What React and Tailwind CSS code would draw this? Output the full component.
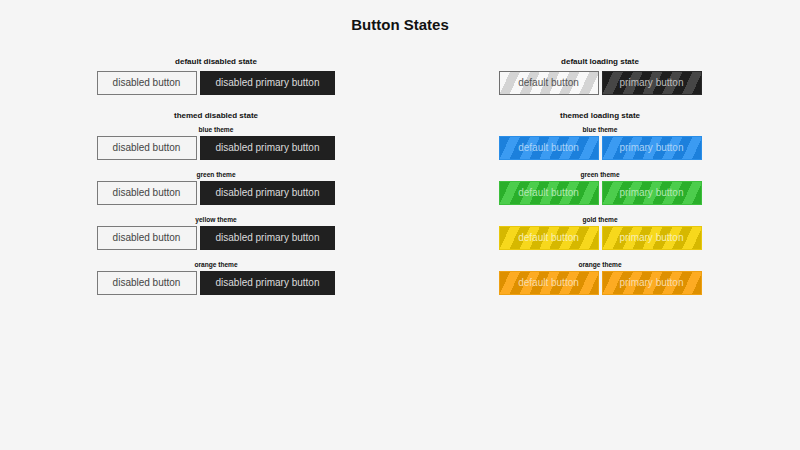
const THEMES_DISABLED = ['blue', 'green', 'yellow', 'orange'];

const LOADING = [
  {
    name: 'blue',
    cls: 'bg-[repeating-linear-gradient(115deg,#1c80dc_0px,#1c80dc_9px,#3b9bf2_9px,#3b9bf2_18px)] border-[#2a8ee8] text-[#a9d2f7]',
  },
  {
    name: 'green',
    cls: 'bg-[repeating-linear-gradient(115deg,#2aaf2a_0px,#2aaf2a_9px,#4ccd4c_9px,#4ccd4c_18px)] border-[#3cbf3c] text-[#b3e8b3]',
  },
  {
    name: 'gold',
    cls: 'bg-[repeating-linear-gradient(115deg,#d6b800_0px,#d6b800_9px,#f7d81c_9px,#f7d81c_18px)] border-[#e8c80c] text-[#f8eeb0]',
  },
  {
    name: 'orange',
    cls: 'bg-[repeating-linear-gradient(115deg,#de9000_0px,#de9000_9px,#fdab22_9px,#fdab22_18px)] border-[#eea012] text-[#f9dcaa]',
  },
];

const btn = 'h-[24px] min-w-[100px] px-[15px] border flex items-center justify-center text-[10px] leading-none whitespace-nowrap';

function Heading({ children }) {
  return <div className="text-[8px] leading-[10px] font-bold text-[#111] text-center mb-[4px]">{children}</div>;
}

function Label({ children }) {
  return <div className="text-[6.6px] leading-[8px] font-bold text-[#111] text-center mb-[2px]">{children}</div>;
}

function DisabledPair() {
  return (
    <div className="flex justify-center gap-[3px]">
      <div className={`${btn} border-[#7a7a7a] bg-[#f4f4f4] text-[#444]`}>disabled button</div>
      <div className={`${btn} border-[#1f1f1f] bg-[#202020] text-[#dcdcdc]`}>disabled primary button</div>
    </div>
  );
}

export default function App() {
  return (
    <div className="min-h-[450px] bg-[#f5f5f5] pt-[16px] font-['Liberation_Sans',Arial,sans-serif]">
      <h1 className="text-[15px] leading-[17px] font-bold text-center text-[#111]">Button States</h1>

      <div className="grid grid-cols-[384px_384px] pl-[24px] mt-[24px]">
        {/* Disabled */}
        <div>
          <Heading>default disabled state</Heading>
          <DisabledPair />

          <div className="mt-[16px]">
            <Heading>themed disabled state</Heading>
          </div>
          <div className="mt-[5px] flex flex-col gap-[11px]">
            {THEMES_DISABLED.map((t) => (
              <div key={t}>
                <Label>{t} theme</Label>
                <DisabledPair />
              </div>
            ))}
          </div>
        </div>

        {/* Loading */}
        <div>
          <Heading>default loading state</Heading>
          <div className="flex justify-center gap-[3px]">
            <div className={`${btn} border-[#6f6f6f] text-[#555] bg-[repeating-linear-gradient(115deg,#f8f8f8_0px,#f8f8f8_9px,#d4d4d4_9px,#d4d4d4_18px)]`}>default button</div>
            <div className={`${btn} border-[#2a2a2a] text-[#bdbdbd] bg-[repeating-linear-gradient(115deg,#1e1e1e_0px,#1e1e1e_9px,#464646_9px,#464646_18px)]`}>primary button</div>
          </div>

          <div className="mt-[16px]">
            <Heading>themed loading state</Heading>
          </div>
          <div className="mt-[5px] flex flex-col gap-[11px]">
            {LOADING.map((t) => (
              <div key={t.name}>
                <Label>{t.name} theme</Label>
                <div className="flex justify-center gap-[3px]">
                  <div className={`${btn} ${t.cls}`}>default button</div>
                  <div className={`${btn} ${t.cls}`}>primary button</div>
                </div>
              </div>
            ))}
          </div>
        </div>
      </div>
    </div>
  );
}
